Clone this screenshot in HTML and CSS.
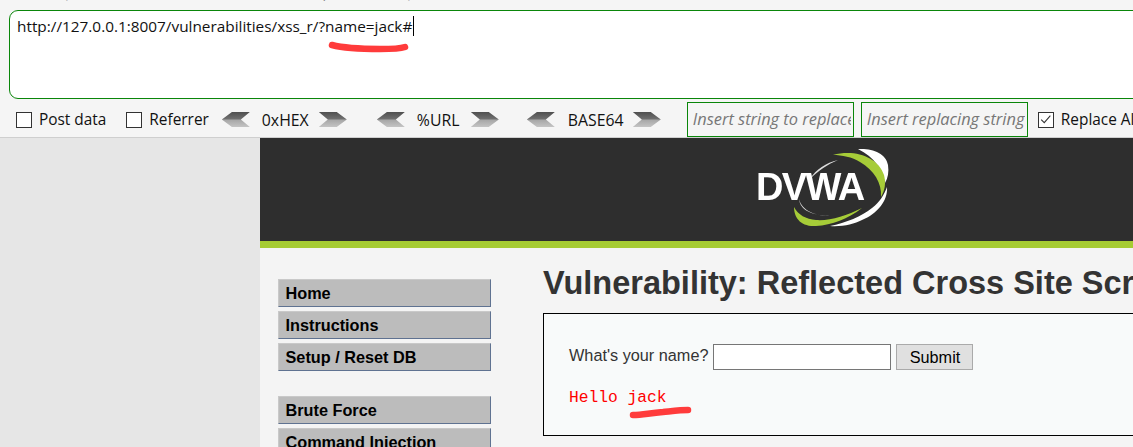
FILE: index.html
```html
<!DOCTYPE html>
<html lang="en">
<head>
<meta charset="utf-8">
<title>DVWA</title>
<link rel="stylesheet" href="styles.css">
</head>
<body>
<div class="toolbar">
  <div class="cut-line"><span class="cut a">{</span><span class="cut b">)</span><span class="cut c">{</span></div>
  <div class="address">http://127.0.0.1:8007/vulnerabilities/xss_r/?name=jack#<span class="caret"></span></div>
  <div class="controls">
    <label class="check"><span class="box"></span>Post data</label>
    <label class="check check-ref"><span class="box"></span>Referrer</label>
    <div class="enc enc-hex"><i class="arrow left"></i><span class="enc-name">0xHEX</span><i class="arrow right"></i></div>
    <div class="enc enc-url"><i class="arrow left"></i><span class="enc-name">%URL</span><i class="arrow right"></i></div>
    <div class="enc enc-b64"><i class="arrow left"></i><span class="enc-name">BASE64</span><i class="arrow right"></i></div>
    <input class="replace first" placeholder="Insert string to replace">
    <input class="replace" placeholder="Insert replacing string">
    <label class="check check-all"><span class="box"><svg viewBox="0 0 16 16" width="14" height="14"><path d="M2.5 7.5l3.5 3.5 7-8" fill="none" stroke="#333" stroke-width="1.2"/></svg></span>Replace All</label>
  </div>
</div>
<div class="frame">
  <div class="gutter"></div>
  <div class="page">
    <div class="header">
      <svg class="logo" viewBox="0 0 145 85" width="145" height="85">
        <path fill="#fff" d="M108 4C122 3 136 8 138 20C139 27 138 33 135 38C133 25 124 12 108 4Z"/>
        <path fill="#fff" d="M137 42C138 56 127 69 112 75C104 79 92 82 80 81C96 78 112 71 122 63C130 57 134 50 137 42Z"/>
        <path fill="#ddd" d="M88 15C76 18 66 24 60 34C68 26 78 19 88 15Z"/>
        <path fill="#ddd" d="M49 54C50 62 56 70 80 71C66 71 52 66 49 54Z"/>
        <path fill="#a6cc38" d="M83 10C105 4 128 12 134 30C136 38 135 45 131 52C132 38 124 25 110 17C102 12 92 10 83 10Z"/>
        <path fill="#a6cc38" d="M44 62C44 72 50 82 66 81C82 80 98 74 112 63C96 71 80 76 66 75C56 74 48 70 44 62Z"/>
        <text class="logo-text" x="6" y="55">DVWA</text>
      </svg>
    </div>
    <div class="green-bar"></div>
    <div class="main">
      <nav class="menu">
        <a class="item">Home</a>
        <a class="item">Instructions</a>
        <a class="item">Setup / Reset DB</a>
        <a class="item group">Brute Force</a>
        <a class="item">Command Injection</a>
      </nav>
      <div class="body-col">
        <h1 class="title">Vulnerability: Reflected Cross Site Scripting (XSS)</h1>
        <div class="vuln">
          <div class="name-row">
            <span class="name-label">What's your name?</span>
            <input class="name-input">
            <button class="submit">Submit</button>
          </div>
          <pre class="hello">Hello jack</pre>
        </div>
      </div>
    </div>
  </div>
</div>
<svg class="mark mark-top" viewBox="0 0 84 12" width="84" height="12"><path d="M5 4C16 7 34 8 53 8C62 8 72 8 78 6" fill="none" stroke="#ff3b3b" stroke-width="6.5" stroke-linecap="round"/></svg>
<svg class="mark mark-bottom" viewBox="0 0 68 16" width="68" height="16"><path d="M6 11C16 11 22 9 36 8C46 7 54 6 61 6" fill="none" stroke="#ff3b3b" stroke-width="6.5" stroke-linecap="round"/></svg>
</body>
</html>
```
FILE: styles.css
```css
* { box-sizing: border-box; }
html, body { margin: 0; height: 447px; overflow: hidden; background: #e6e6e6; }
body { position: relative; width: 1133px; }

.toolbar {
  height: 138px;
  background: #f5f5f5;
  border-bottom: 1px solid #cfcfcf;
  font-family: "Open Sans", "Noto Sans", sans-serif;
  color: #111;
  overflow: hidden;
}
.cut-line { height: 10px; position: relative; }
.cut { position: absolute; top: -19px; font-size: 16px; line-height: 22px; color: #111; }
.cut.a { left: 62px; }
.cut.b { left: 323px; }
.cut.c { left: 404px; }

.address {
  margin-left: 9px;
  width: 1200px;
  height: 89px;
  background: #fff;
  border: 1px solid #0a860a;
  border-radius: 9px 0 0 9px;
  padding: 5px 7px;
  font-size: 15.35px;
  line-height: 20px;
  color: #111;
  white-space: nowrap;
}
.caret { display: inline-block; width: 1px; height: 20px; margin-left: 1px; background: #000; vertical-align: top; }

.controls {
  display: flex;
  align-items: center;
  height: 35px;
  margin-top: 3px;
  padding-left: 16px;
  white-space: nowrap;
  font-size: 15.4px;
  line-height: 20px;
}
.check { display: flex; align-items: center; gap: 7px; }
.check-ref { margin-left: 20px; }
.check-all { margin-left: 10px; }
.box {
  width: 16px;
  height: 16px;
  border: 1px solid #333;
  background: #fff;
  display: flex;
  align-items: center;
  justify-content: center;
  flex: none;
}
.enc { display: flex; align-items: center; }
.enc-name { font-size: 15.8px; }
.enc-hex { margin-left: 13px; }
.enc-hex .enc-name { margin: 0 10px 0 12px; width: 47px; }
.enc-url { margin-left: 30px; }
.enc-url .enc-name { margin: 0 12px; width: 42px; }
.enc-b64 { margin-left: 28px; }
.enc-b64 .enc-name { margin: 0 11px 0 13px; width: 54px; }
.arrow {
  display: block;
  width: 28px;
  height: 15px;
  background: linear-gradient(#4f4f4f, #6e6e6e 45%, #a8a8a8 55%, #c4c4c4);
}
.arrow.left { clip-path: polygon(0 50%, 36% 0, 100% 0, 68% 50%, 100% 100%, 36% 100%); }
.arrow.right { clip-path: polygon(0 0, 64% 0, 100% 50%, 64% 100%, 0 100%, 32% 50%); }
.replace {
  width: 167px;
  height: 35px;
  border: 1px solid #0a860a;
  background: #f5f5f5;
  padding: 0 2px 2px 5px;
  margin: 0;
  font-family: "Open Sans", "Noto Sans", sans-serif;
  font-size: 16.4px;
  font-style: italic;
  outline: none;
}
.replace::placeholder { color: #777; opacity: 1; }
.replace.first { margin-left: 26px; margin-right: 7px; }

.frame { display: flex; height: 309px; }
.gutter { flex: none; width: 260px; background: #e6e6e6; }
.page {
  flex: none;
  width: 873px;
  background: #f4f4f4;
  overflow: hidden;
  font-family: "Liberation Sans", Arial, sans-serif;
}
.header {
  height: 103px;
  background: #2e2e2e;
  padding: 7px 0 0 490px;
}
.logo { display: block; filter: blur(0.4px); }
.logo-text {
  font-family: "Liberation Sans", Arial, sans-serif;
  font-weight: 700;
  font-size: 38px;
  letter-spacing: -1.6px;
  fill: #fff;
}
.green-bar { height: 7px; background: #a6cc33; }
.main { display: flex; padding: 31px 0 0 18px; }
.menu { flex: none; width: 213px; display: flex; flex-direction: column; gap: 4px; }
.item {
  display: block;
  height: 28px;
  background: #bcbcbc;
  border: 1px solid #c9c9c9;
  border-bottom-color: #5f7291;
  border-right-color: #5f7291;
  padding-left: 6.5px;
  font-size: 16.25px;
  font-weight: 700;
  line-height: 27px;
  color: #000;
  white-space: nowrap;
}
.item.group { margin-top: 21px; }
.body-col { flex: none; width: 800px; margin-left: 52px; }
.title {
  margin: -19px 0 0;
  height: 53px;
  font-size: 32.5px;
  line-height: 40px;
  padding-top: 3px;
  font-weight: 700;
  color: #333;
  white-space: nowrap;
}
.vuln {
  width: 800px;
  height: 123px;
  background: #f8fafa;
  border: 1px solid #000;
  padding: 30px 0 0 25px;
}
.name-row { display: flex; align-items: center; height: 26px; }
.name-label { font-size: 16.25px; color: #333; margin-top: -4px; }
.name-input {
  width: 178px;
  height: 26px;
  margin: 0 5px 0 5px;
  border: 1px solid #767676;
  background: #fff;
  padding: 0;
}
.submit {
  width: 77px;
  height: 26px;
  background: #e0e0e0;
  border: 1px solid #aaa;
  padding: 0;
  font-family: "Liberation Sans", Arial, sans-serif;
  font-size: 16.25px;
  color: #000;
}
.hello {
  margin: 18px 0 0;
  font-family: "Liberation Mono", "Courier New", monospace;
  font-size: 16.25px;
  line-height: 20px;
  color: #f00;
}

.mark { position: absolute; display: block; }
.mark-top { left: 327px; top: 41px; }
.mark-bottom { left: 627px; top: 404px; }
```
